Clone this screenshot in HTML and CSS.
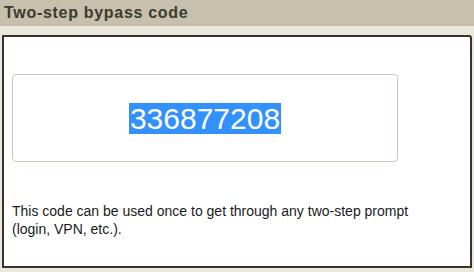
FILE: index.html
```html
<!DOCTYPE html>
<html lang="en">
  <head>
    <meta charset="UTF-8" />
    <title>Two-step bypass code</title>
    <link rel="stylesheet" href="styles.css">
  </head>
  <body>
    <div class="header">
      <h2>Two-step bypass code</h2>
    </div>
    <div class="strip"></div>
    <div class="panel">
      <div class="code-box">
        <span class="code">336877208</span>
      </div>
      <p class="note">This code can be used once to get through any two-step prompt (login, VPN, etc.).</p>
    </div>
  </body>
</html>
```

FILE: styles.css
```css
body {
  margin: 0;
  font-family: "Liberation Sans", Arial, sans-serif;
  background: #ece7dd;
  width: 474px;
  height: 272px;
  overflow: hidden;
}

.header {
  background: #c6c0ac;
  height: 26px;
  padding-left: 4px;
}

.header h2 {
  margin: 0;
  font-size: 16px;
  line-height: 26px;
  color: #3d3a30;
  font-weight: bold;
  letter-spacing: 0.7px;
}

.strip {
  height: 9px;
}

.panel {
  margin: 0 2px 2px 2px;
  height: 229px;
  background: #fff;
  border: 2px solid #35332d;
  border-top-right-radius: 3px;
  padding: 0 8px;
}

.code-box {
  margin-top: 37px;
  width: 384px;
  height: 86px;
  border: 1px solid #ccc8bc;
  border-radius: 4px;
  display: flex;
  justify-content: center;
  align-items: center;
}

.code {
  font-size: 30px;
  line-height: 31px;
  color: #fff;
  background: #3390ff;
  padding: 0 1px;
}

.note {
  margin: 40px 0 0 0;
  max-width: 430px;
  font-size: 14px;
  line-height: 18px;
  color: #1a1a1a;
}
```
